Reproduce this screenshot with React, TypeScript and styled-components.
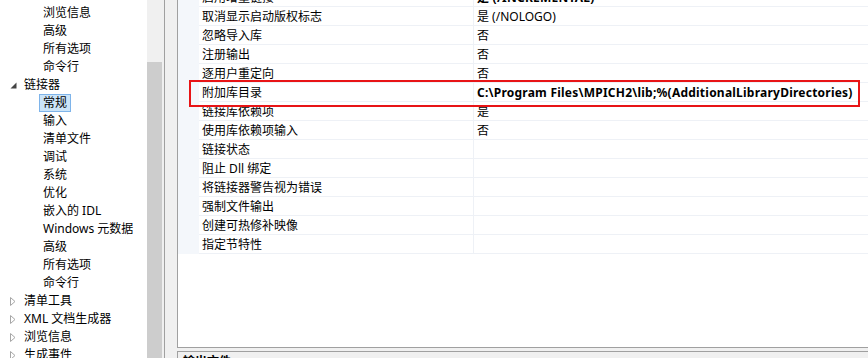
import React from "react";
import styled, { createGlobalStyle } from "styled-components";

const Global = createGlobalStyle`
  html, body { margin: 0; padding: 0; }
  body {
    width: 868px;
    height: 358px;
    overflow: hidden;
    background: #f0f0f0;
    font-family: "Noto Sans", "Noto Sans CJK SC", sans-serif;
    font-size: 12px;
    color: #000;
  }
`;

const Page = styled.div`
  display: flex;
  width: 868px;
  height: 358px;
  overflow: hidden;
`;

const TreePanel = styled.div`
  display: flex;
  width: 164px;
  height: 358px;
  border-right: 1px solid #a0a0a0;
  background: #fff;
  flex-shrink: 0;
`;

const TreeList = styled.ul`
  list-style: none;
  margin: 0;
  padding: 4px 0 0 0;
  width: 147px;
  overflow: hidden;
`;

const TreeRow = styled.li<{ $level: number }>`
  display: flex;
  align-items: center;
  height: 18px;
  padding-left: ${(p) => (p.$level === 0 ? 9 : 39)}px;
  white-space: nowrap;
`;

const Expander = styled.span`
  display: inline-flex;
  align-items: center;
  justify-content: center;
  width: 8px;
  height: 18px;
  margin-right: 3px;
`;

const Label = styled.span<{ $selected?: boolean }>`
  display: inline-flex;
  align-items: center;
  height: 16px;
  padding: 0 3px;
  border: 1px solid ${(p) => (p.$selected ? "#7eb4ea" : "transparent")};
  background: ${(p) => (p.$selected ? "#cbe4f8" : "transparent")};
  line-height: 16px;
`;

const Scrollbar = styled.div`
  display: flex;
  flex-direction: column;
  width: 17px;
  background: #f0f0f0;
`;

const Thumb = styled.div`
  margin-top: 62px;
  width: 15px;
  flex: 1;
  background: #cdcdcd;
`;

const RightColumn = styled.div`
  display: flex;
  flex-direction: column;
  flex: 1;
  padding-left: 12px;
  gap: 3px;
`;

const GridBox = styled.div`
  margin-top: -13px;
  height: 359px;
  border: 1px solid #a0a0a0;
  border-right: none;
  background: #fff;
  flex-shrink: 0;
  overflow: hidden;
`;

const GridRow = styled.div`
  display: grid;
  grid-template-columns: 21px 274px 1fr;
  height: 19px;
`;

const Margin = styled.div`
  background: #f4f7fb;
`;

const Cell = styled.div<{ $bold?: boolean; $value?: boolean }>`
  display: flex;
  align-items: center;
  padding: 1px 0 0 3px;
  border-bottom: 1px solid #eef1f6;
  border-left: ${(p) => (p.$value ? "1px solid #eef1f6" : "none")};
  font-weight: ${(p) => (p.$bold ? 700 : 400)};
  letter-spacing: ${(p) => (p.$bold ? "0.23px" : "0")};
  white-space: nowrap;
  line-height: 17px;
`;

const Highlight = styled.div`
  position: absolute;
  left: 189px;
  top: 80px;
  width: 667px;
  height: 23px;
  border: 2px solid #e81416;
  pointer-events: none;
`;

const DescBox = styled.div`
  flex: 1;
  border-top: 1px solid #a0a0a0;
  border-left: 1px solid #a0a0a0;
  padding: 2px 0 0 5px;
  font-weight: 700;
  line-height: 16px;
`;

const Collapsed = () => (
  <svg width="6" height="9" viewBox="0 0 6 9">
    <path d="M0.5 0.5 L5 4.5 L0.5 8.5 Z" fill="none" stroke="#a6a6a6" strokeWidth="1" />
  </svg>
);

const Expanded = () => (
  <svg width="7" height="7" viewBox="0 0 7 7">
    <path d="M6.5 0.5 L6.5 6.5 L0.5 6.5 Z" fill="#444" />
  </svg>
);

type TreeItem = { label: string; level: number; state?: "open" | "closed"; selected?: boolean };

const tree: TreeItem[] = [
  { label: "浏览信息", level: 1 },
  { label: "高级", level: 1 },
  { label: "所有选项", level: 1 },
  { label: "命令行", level: 1 },
  { label: "链接器", level: 0, state: "open" },
  { label: "常规", level: 1, selected: true },
  { label: "输入", level: 1 },
  { label: "清单文件", level: 1 },
  { label: "调试", level: 1 },
  { label: "系统", level: 1 },
  { label: "优化", level: 1 },
  { label: "嵌入的 IDL", level: 1 },
  { label: "Windows 元数据", level: 1 },
  { label: "高级", level: 1 },
  { label: "所有选项", level: 1 },
  { label: "命令行", level: 1 },
  { label: "清单工具", level: 0, state: "closed" },
  { label: "XML 文档生成器", level: 0, state: "closed" },
  { label: "浏览信息", level: 0, state: "closed" },
  { label: "生成事件", level: 0, state: "closed" },
];

type Prop = { name: string; value?: string; bold?: boolean };

const props: Prop[] = [
  { name: "启用增量链接", value: "是 (/INCREMENTAL)", bold: true },
  { name: "取消显示启动版权标志", value: "是 (/NOLOGO)" },
  { name: "忽略导入库", value: "否" },
  { name: "注册输出", value: "否" },
  { name: "逐用户重定向", value: "否" },
  { name: "附加库目录", value: "C:\\Program Files\\MPICH2\\lib;%(AdditionalLibraryDirectories)", bold: true },
  { name: "链接库依赖项", value: "是" },
  { name: "使用库依赖项输入", value: "否" },
  { name: "链接状态" },
  { name: "阻止 Dll 绑定" },
  { name: "将链接器警告视为错误" },
  { name: "强制文件输出" },
  { name: "创建可热修补映像" },
  { name: "指定节特性" },
];

export default function App() {
  return (
    <>
      <Global />
      <Page>
        <TreePanel>
          <TreeList>
            {tree.map((t, i) => (
              <TreeRow key={i} $level={t.level}>
                {t.level === 0 && (
                  <Expander>{t.state === "open" ? <Expanded /> : <Collapsed />}</Expander>
                )}
                <Label $selected={t.selected}>{t.label}</Label>
              </TreeRow>
            ))}
          </TreeList>
          <Scrollbar>
            <Thumb />
          </Scrollbar>
        </TreePanel>
        <RightColumn>
          <GridBox>
            {props.map((p, i) => (
              <GridRow key={i}>
                <Margin />
                <Cell>{p.name}</Cell>
                <Cell $value $bold={p.bold}>{p.value ?? ""}</Cell>
              </GridRow>
            ))}
          </GridBox>
          <DescBox>输出文件</DescBox>
        </RightColumn>
      </Page>
      <Highlight />
    </>
  );
}
